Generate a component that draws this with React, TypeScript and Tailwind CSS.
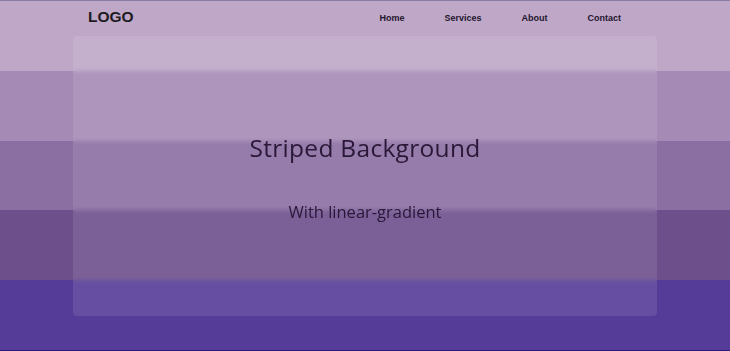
const links = ['Home', 'Services', 'About', 'Contact'];

export default function App() {
  return (
    <div className="h-[351px] w-full border-t border-b border-t-[#8a7aa8] border-b-[#2a1c7c] bg-[linear-gradient(#bea7c7_0%_20%,#a58ab5_20%_40%,#8b6ea2_40%_60%,#6d4f8c_60%_80%,#553c98_80%_100%)] font-['Open_Sans',sans-serif]">
      {/* header */}
      <header className="flex h-[35px] items-center justify-between pl-[88px] pr-[109px]">
        <div className="-mt-[3px] font-['Liberation_Sans',sans-serif] text-[15.5px] font-bold text-[#1e1a22]">LOGO</div>
        <nav className="flex items-center gap-[40px] pt-[1px] font-['Liberation_Sans',sans-serif] text-[9px] font-bold text-[#24162e]">
          {links.map((l) => (
            <span key={l}>{l}</span>
          ))}
        </nav>
      </header>

      {/* card */}
      <section className="mx-[73px] flex h-[280px] flex-col items-center rounded bg-white/10 pt-[96px] backdrop-blur-[2px]">
        <h1 className="text-[24.5px] leading-[32px] tracking-[0.3px] text-[#2a1838]">Striped Background</h1>
        <p className="mt-[36px] text-[16.5px] leading-[24px] text-[#2a1838]">With linear-gradient</p>
      </section>
    </div>
  );
}
